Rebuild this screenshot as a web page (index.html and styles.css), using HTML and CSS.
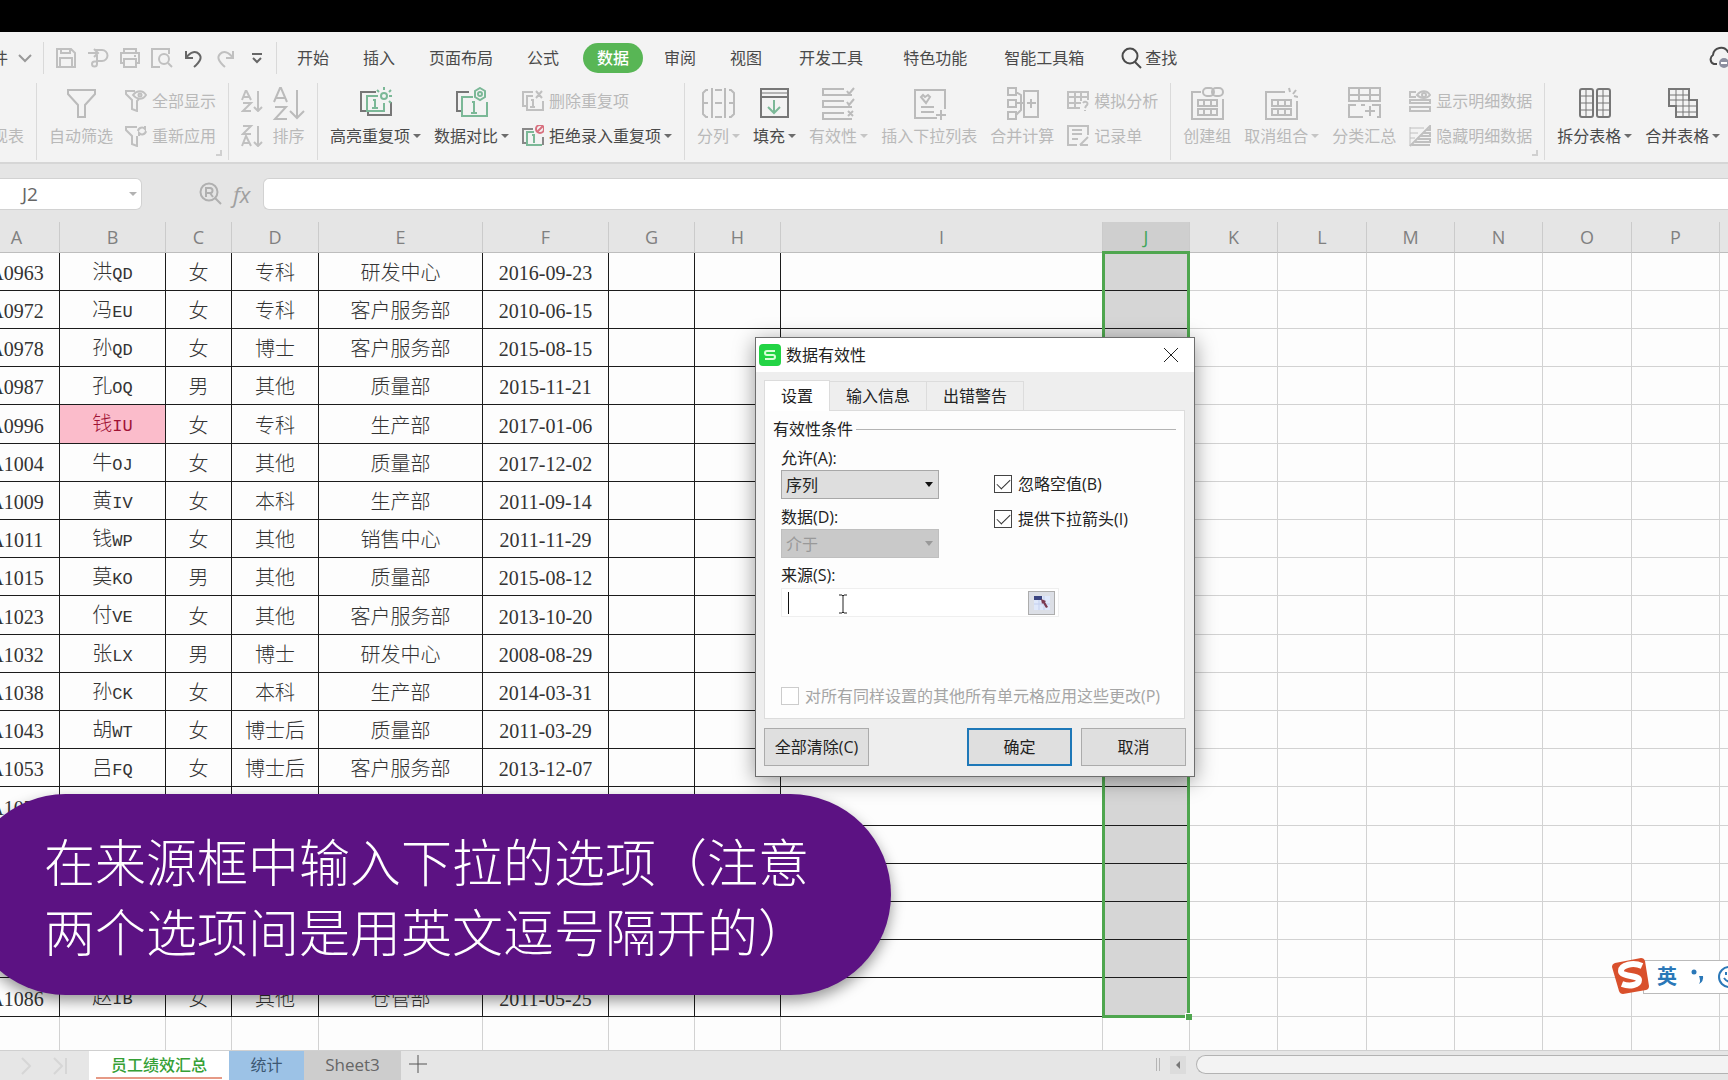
FILE: index.html
```html
<!DOCTYPE html>
<html lang="zh-CN">
<head>
<meta charset="utf-8">
<title>员工绩效汇总</title>
<link rel="stylesheet" href="styles.css">
</head>
<body>
<div class="letterbox"></div>
<header class="toolbar">
  <nav class="menubar">
    <button class="file-menu">件<svg width="14" height="10" viewBox="0 0 14 10"><path d="M1 2l6 6 6-6"/></svg></button>
    <div class="quick">
      <button aria-label="保存"><svg class="ic" viewBox="0 0 22 22"><path d="M2 2h14l4 4v14H2zM6 2v4h9V2M5 20v-9h12v9"/></svg></button>
      <button aria-label="输出"><svg class="ic" viewBox="0 0 22 22"><path d="M8 3h7a5 5 0 0 1 0 11h-5v3a2.500 2.500 0 1 1-2.500-2.500H10V8M1 6h9M7 2l4 4-4 4"/></svg></button>
      <button aria-label="打印"><svg class="ic" viewBox="0 0 22 22"><path d="M5 6V2h12v4M5 16H2V6h18v10h-3M5 12h12v8H5zM15 9h2"/></svg></button>
      <button aria-label="打印预览"><svg class="ic" viewBox="0 0 22 22"><path d="M18 7V2H1v18h8"/><circle cx="13" cy="12" r="5"/><path d="M17 16l4 4"/></svg></button>
      <button aria-label="撤销"><svg class="ic dark" viewBox="0 0 22 22"><path d="M3 4v7h7M3 11c5-7 10-7 13-4s2 7-5 13"/></svg></button>
      <button aria-label="恢复"><svg class="ic" viewBox="0 0 22 22"><path d="M18 4v7h-7M18 11C13 4 8 4 5 7s-2 7 5 13"/></svg></button>
      <button aria-label="自定义"><svg class="ic dark" viewBox="0 0 22 22"><path d="M5 7h10M6 11l4 4 4-4"/></svg></button>
    </div>
    <div class="tabs">
      <button>开始</button><button>插入</button><button>页面布局</button><button>公式</button>
      <button class="active">数据</button>
      <button>审阅</button><button>视图</button><button class="wide">开发工具</button><button class="wide">特色功能</button><button>智能工具箱</button>
      <button class="find"><svg width="22" height="22" viewBox="0 0 22 22"><circle cx="9" cy="9" r="7.500"/><path d="M14 15l6 6"/></svg>查找</button>
    </div>
    <button class="cloud" aria-label="云同步"><svg width="28" height="24" viewBox="0 0 28 24"><path d="M9 18H6a5 5 0 0 1-1-9 8 8 0 0 1 15-3 6 6 0 0 1 3 11"/><circle class="dot" cx="16" cy="17" r="5"/><path class="dash" d="M13 17h6"/></svg></button>
  </nav>
  <div class="ribbon">
    <div class="group first"><button class="big off"><span class="label">现表</span></button></div>
    <div class="group filter">
      <button class="big off"><svg class="bi" viewBox="0 0 33 33"><path d="M3 3h27v4L20 18v12h-7V18L3 7z"/></svg><span class="label">自动筛选</span></button>
      <div class="stack">
        <button class="small off"><svg class="ic" viewBox="0 0 22 22"><path d="M10 1H1v3l6 6v9l5 2V11l2-2"/><path d="M8 5c4-5 10-5 13 0-3 5-9 5-13 0z"/><circle cx="15" cy="5" r="1.500"/></svg>全部显示</button>
        <button class="small off"><svg class="ic" viewBox="0 0 22 22"><path d="M12 2H1v3l6 6v8l5 2V11M13 6a4 4 0 0 1 7-2V1M21 6a4 4 0 0 1-7 2v3"/></svg>重新应用</button>
      </div>
      <i class="corner"></i>
    </div>
    <div class="group sort">
      <div class="stack">
        <button class="small off" aria-label="升序"><svg class="ic" viewBox="0 0 22 22"><path d="M1 10L5 0l5 10M2 7h6M2 13h8L2 21h8M17 1v20M13 17l4 4 4-4"/></svg></button>
        <button class="small off" aria-label="降序"><svg class="ic" viewBox="0 0 22 22"><path d="M2 1h8L2 9h8M1 21l4-10 5 10M2 18h6M17 1v20M13 17l4 4 4-4"/></svg></button>
      </div>
      <button class="big off"><svg class="bi" viewBox="0 0 33 33"><path d="M2 15L8 1h1l6 14M4 11h9M3 20h11L3 32h12M25 3v28M18 24l7 7 7-7"/></svg><span class="label">排序</span></button>
    </div>
    <div class="group">
      <button class="big"><svg class="bi" viewBox="0 0 33 33"><path d="M17 5H2v19h5M9 24v4h23V15"/><path class="g" d="M19 9H8v15h17v-8M14 13h2v8M13 21h6"/><circle class="g" cx="25" cy="9" r="3"/><path class="g" d="M25 0v3M18 3l2 2M32 3l-2 2M30 9h3M30 14l2 2"/></svg><span class="label caret">高亮重复项</span></button>
      <button class="big"><svg class="bi" viewBox="0 0 33 33"><path d="M14 5H2v19h4"/><path class="g" d="M18 10H7v19h25V15M17 15h2v11M16 26h6M25 1l5 3v6l-5 3-5-3V4z"/><circle class="g" cx="25" cy="7" r="2"/></svg><span class="label caret">数据对比</span></button>
      <div class="stack">
        <button class="small off"><svg class="ic" viewBox="0 0 22 22"><path d="M11 2H1v14h3M11 6H5v14h16v-9M9 10h2v7M8 17h5M14 1l6 7M20 1l-6 7"/></svg>删除重复项</button>
        <button class="small"><svg class="ic mid" viewBox="0 0 22 22"><path d="M11 4H1v14h3M21 12v8"/><path class="g" d="M12 7H5v13h15M10 10h2v8"/><circle class="r" cx="18" cy="4" r="4"/><path class="r" d="M15 7l6-6"/></svg><span class="caret">拒绝录入重复项</span></button>
      </div>
    </div>
    <div class="group">
      <button class="big off"><svg class="bi" viewBox="0 0 33 33"><path d="M6 3H4L1 6v21l3 3h2M27 3h2l3 3v21l-3 3h-2M10 1v30M23 1v30M13 3h7M13 16h7M13 30h7M2 16h4M27 16h4"/></svg><span class="label caret">分列</span></button>
      <button class="big"><svg class="bi" viewBox="0 0 33 33"><path d="M3 2h27v28H3zM3 10h27"/><path class="thin" d="M4 6h25"/><path class="g" d="M16 13v13M10 20l6 6 6-6"/></svg><span class="label caret">填充</span></button>
      <button class="big off"><svg class="bi" viewBox="0 0 33 33"><path d="M22 2H1v6h29M22 14H1v6h29M22 26H1v6h29M25 4l2 3 5-6M25 15l2 3 5-6M26 24l5 5M31 24l-5 5"/></svg><span class="label caret">有效性</span></button>
      <button class="big off"><svg class="bi" viewBox="0 0 33 33"><path d="M24 31H2V3h30v19M28 23v10M23 28h10M8 10l5 6 4-6-2-2-3 2-2-2zM8 20h13M8 25h13"/></svg><span class="label">插入下拉列表</span></button>
      <button class="big off"><svg class="bi" viewBox="0 0 33 33"><path d="M2 1h8v7H2zM2 13h8v7H2zM2 25h8v7H2zM18 4h14v26H18zM25 12v9M21 16h9M10 5l5 3v15l-5 5M10 16h8"/></svg><span class="label">合并计算</span></button>
      <div class="stack">
        <button class="small off"><svg class="ic" viewBox="0 0 22 22"><path d="M13 18H1V2h20v8M1 7h20M8 2v16M14 2v9M1 13h13M16 13c2-3 7 0 3 3l-1 2M18 20v1"/></svg>模拟分析</button>
        <button class="small off"><svg class="ic" viewBox="0 0 22 22"><path d="M10 20H1V1h20v9M5 5h10M5 9h10M5 14h6M13 20l8-8M13 20h8"/></svg>记录单</button>
      </div>
    </div>
    <div class="group">
      <button class="big off"><svg class="bi" viewBox="0 0 33 33"><path d="M10 5H1v27h31V12M7 13h19v6H7zM7 22h19v6H7zM13 13v6M20 13v6M13 22v6M20 22v6"/><rect x="12" y="1" width="11" height="8" rx="4"/><rect x="21" y="1" width="11" height="8" rx="4"/></svg><span class="label">创建组</span></button>
      <button class="big off"><svg class="bi" viewBox="0 0 33 33"><path d="M20 5H1v27h31V14M7 13h19v6H7zM7 22h19v6H7zM13 13v6M20 13v6M13 22v6M20 22v6M24 1l1 4M31 3l-3 4M33 10l-4-1"/></svg><span class="label caret">取消组合</span></button>
      <button class="big off"><svg class="bi" viewBox="0 0 33 33"><path d="M1 1h31v13H1zM1 8h31M11 1v13M22 1v13M8 18H1v12h14M13 18h4M24 18h8v12h-3M22 19v10M17 24h10"/></svg><span class="label">分类汇总</span></button>
      <div class="stack">
        <button class="small off"><svg class="ic" viewBox="0 0 22 22"><path d="M7 2H1v5h6M7 10H1M1 10h20v3H1zM1 17h20v4H1zM8 5c4-5 10-5 13 0-3 4-9 4-13 0z"/><circle cx="15" cy="5" r="2"/></svg>显示明细数据</button>
        <button class="small off"><svg class="ic" viewBox="0 0 22 22"><path class="thin" d="M1 3h14M1 8h8M1 13h5M1 2v19"/><path d="M1 21L21 1v4h-4M14 8h7v3H11M9 14h12v3H6M3 20h18"/></svg>隐藏明细数据</button>
      </div>
      <i class="corner"></i>
    </div>
    <div class="group last">
      <button class="big"><svg class="bi" viewBox="0 0 33 33"><rect x="2" y="2" width="13" height="28" rx="2"/><rect x="19" y="2" width="13" height="28" rx="2"/><path class="thin" d="M8 2v28M2 9h13M2 16h13M2 23h13M25 2v28M19 9h13M19 16h13M19 23h13"/></svg><span class="label caret">拆分表格</span></button>
      <button class="big"><svg class="bi" viewBox="0 0 33 33"><path d="M3 2h20v11h8v17H10V19H3z"/><path class="thin" d="M10 2v17M17 2v28M23 13v17M3 8h20M3 13h20M10 19h21M10 25h21"/></svg><span class="label caret">合并表格</span></button>
    </div>
  </div>
</header>
<section class="formula">
  <button class="namebox caret">J2</button>
  <svg class="lookup" width="24" height="24" viewBox="0 0 24 24"><circle cx="10" cy="10" r="8.500"/><path d="M7 15V6h4a2 2 0 0 1 0 5H7M11 11l3 4M16 16l6 6"/></svg>
  <span class="fx">fx</span>
  <input aria-label="编辑栏" class="fxinput" type="text">
</section>
<main class="sheet">
  <table>
    <colgroup><col class="wa"><col class="wb"><col class="wc"><col class="wd"><col class="we"><col class="wf"><col class="wg"><col class="wg"><col class="wi"><col class="wd"><col class="wk"><col class="wl"><col class="wk"><col class="wk"><col class="wl"><col class="wk"><col></colgroup>
    <thead><tr><th>A<th>B<th>C<th>D<th>E<th>F<th>G<th>H<th>I<th class="on">J<th>K<th>L<th>M<th>N<th>O<th>P<th></tr></thead>
    <tbody class="data">
    <tr><td>A0963<td>洪<b>QD</b><td>女<td>专科<td>研发中心<td>2016-09-23<td><td><td><td><td><td><td><td><td><td><td></tr>
    <tr><td>A0972<td>冯<b>EU</b><td>女<td>专科<td>客户服务部<td>2010-06-15<td><td><td><td><td><td><td><td><td><td><td><td></tr>
    <tr><td>A0978<td>孙<b>QD</b><td>女<td>博士<td>客户服务部<td>2015-08-15<td><td><td><td><td><td><td><td><td><td><td><td></tr>
    <tr><td>A0987<td>孔<b>OQ</b><td>男<td>其他<td>质量部<td>2015-11-21<td><td><td><td><td><td><td><td><td><td><td><td></tr>
    <tr><td>A0996<td class="dup">钱<b>IU</b><td>女<td>专科<td>生产部<td>2017-01-06<td><td><td><td><td><td><td><td><td><td><td><td></tr>
    <tr><td>A1004<td>牛<b>OJ</b><td>女<td>其他<td>质量部<td>2017-12-02<td><td><td><td><td><td><td><td><td><td><td><td></tr>
    <tr><td>A1009<td>黄<b>IV</b><td>女<td>本科<td>生产部<td>2011-09-14<td><td><td><td><td><td><td><td><td><td><td><td></tr>
    <tr><td>A1011<td>钱<b>WP</b><td>女<td>其他<td>销售中心<td>2011-11-29<td><td><td><td><td><td><td><td><td><td><td><td></tr>
    <tr><td>A1015<td>莫<b>KO</b><td>男<td>其他<td>质量部<td>2015-08-12<td><td><td><td><td><td><td><td><td><td><td><td></tr>
    <tr><td>A1023<td>付<b>VE</b><td>女<td>其他<td>客户服务部<td>2013-10-20<td><td><td><td><td><td><td><td><td><td><td><td></tr>
    <tr><td>A1032<td>张<b>LX</b><td>男<td>博士<td>研发中心<td>2008-08-29<td><td><td><td><td><td><td><td><td><td><td><td></tr>
    <tr><td>A1038<td>孙<b>CK</b><td>女<td>本科<td>生产部<td>2014-03-31<td><td><td><td><td><td><td><td><td><td><td><td></tr>
    <tr><td>A1043<td>胡<b>WT</b><td>女<td>博士后<td>质量部<td>2011-03-29<td><td><td><td><td><td><td><td><td><td><td><td></tr>
    <tr><td>A1053<td>吕<b>FQ</b><td>女<td>博士后<td>客户服务部<td>2013-12-07<td><td><td><td><td><td><td><td><td><td><td><td></tr>
    <tr><td>A1072<td><td><td><td><td><td><td><td><td><td><td><td><td><td><td><td><td></tr>
    <tr><td><td><td><td><td><td><td><td><td><td><td><td><td><td><td><td><td><td></tr>
    <tr><td><td><td><td><td><td><td><td><td><td><td><td><td><td><td><td><td><td></tr>
    <tr><td><td><td><td><td><td><td><td><td><td><td><td><td><td><td><td><td><td></tr>
    <tr><td><td><td><td><td><td><td><td><td><td><td><td><td><td><td><td><td><td></tr>
    <tr><td>A1086<td>赵<b>IB</b><td>女<td>其他<td>仓管部<td>2011-05-25<td><td><td><td><td><td><td><td><td><td><td><td></tr>
    </tbody>
    <tbody class="blank"><tr><td><td><td><td><td><td><td><td><td><td><td><td><td><td><td><td><td></tr></tbody>
  </table>
  <div class="selection"></div>
</main>
<footer class="sheetbar">
  <div class="nav"><svg width="50" height="18" viewBox="0 0 50 18"><path d="M2 1l8 8-8 8M34 1l8 8-8 8M46 1v16"/></svg></div>
  <button class="tab current"><span>员工绩效汇总</span></button>
  <button class="tab blue">统计</button>
  <button class="tab grey">Sheet3</button>
  <button class="add" aria-label="新建工作表"><svg width="18" height="18" viewBox="0 0 18 18"><path d="M9 0v18M0 9h18"/></svg></button>
  <div class="hscroll"><i class="grip"></i><button class="left" aria-label="向左滚动"></button><div class="track"></div></div>
</footer>

<form class="dialog">
  <div class="title">
    <svg width="22" height="22" viewBox="0 0 22 22"><rect width="22" height="22" rx="4" fill="#22d444" stroke="none"/><path d="M16 7H8a2 2 0 0 0 0 4h6a2 2 0 0 1 0 4H6" fill="none" stroke="#d8ffd8" stroke-width="2"/></svg>
    <h2>数据有效性</h2>
    <button type="button" aria-label="关闭"><svg width="14" height="14" viewBox="0 0 14 14"><path d="M0 0l14 14M14 0L0 14"/></svg></button>
  </div>
  <div class="dtabs"><button type="button" class="sel">设置</button><button type="button">输入信息</button><button type="button">出错警告</button></div>
  <div class="panel">
    <div class="legend">有效性条件</div>
    <div class="cols">
      <div class="fields">
        <label for="allow">允许(A):</label>
        <div class="pick"><select id="allow"><option>序列</option></select></div>
        <label for="cond">数据(D):</label>
        <div class="pick disabled"><select id="cond" disabled><option>介于</option></select></div>
      </div>
      <div class="checks">
        <label><input type="checkbox" checked>忽略空值(B)</label>
        <label><input type="checkbox" checked>提供下拉箭头(I)</label>
      </div>
    </div>
    <label class="srclabel" for="src">来源(S):</label>
    <div class="source">
      <i class="insertion"></i>
      <input id="src" type="text">
      <button type="button" aria-label="选择区域"><svg width="18" height="16" viewBox="0 0 18 16"><g stroke="none"><rect width="16" height="14" x="1" y="1" fill="#dfe8fb"/><path d="M1 1h8v4H1z" fill="#3a4480"/></g><path d="M1 9h16M6 5v10M11 1v14" stroke="#c3cfee"/><path d="M8 4l5 2-1 1 3 5-2 1-3-5-1 1z" fill="#7b3a52" stroke="none"/></svg></button>
      <svg class="ibeam" width="10" height="20" viewBox="0 0 10 20"><path d="M1 1h3l1 1 1-1h3M5 2v16M1 19h3l1-1 1 1h3"/></svg>
    </div>
    <label class="apply"><input type="checkbox" disabled>对所有同样设置的其他所有单元格应用这些更改(P)</label>
  </div>
  <div class="actions"><button type="button">全部清除(C)</button><button type="button" class="ok">确定</button><button type="button">取消</button></div>
</form>

<p class="caption">在来源框中输入下拉的选项（注意<br>两个选项间是用英文逗号隔开的）</p>

<aside class="ime">
  <svg class="logo" width="40" height="38" viewBox="0 0 40 38"><path d="M4 6L30 1q3 0 4 3l4 25q0 3-3 4L12 37q-3 0-4-3L1 10q0-3 3-4z" fill="#d9502c"/><path d="M31 9C22 5 10 8 10 14s18 4 18 9-9 7-17 4" fill="none" stroke="#fff" stroke-width="6"/></svg>
  <div class="bar"><span>英</span><svg width="14" height="18" viewBox="0 0 14 18"><circle cx="4" cy="4" r="2.500"/><path d="M9 8h4q1 5-4 8 2-3 0-8z"/></svg><svg width="24" height="24" viewBox="0 0 24 24"><circle class="face" cx="12" cy="12" r="10"/><path class="face" d="M7 13q5 7 10 0M9 7v3M15 7v3"/></svg></div>
</aside>
</body>
</html>
```
FILE: styles.css
```css
* { box-sizing: border-box; }
body {
  margin: 0;
  position: relative;
  min-height: 100vh;
  overflow: hidden;
  display: flex;
  flex-direction: column;
  background: #e5e5e5;
  font: 16px/24px "Open Sans", "Noto Sans CJK SC", sans-serif;
  color: #4a4a4a;
}
button, input, select { font: inherit; color: inherit; margin: 0; }
button { border: 0; padding: 0; background: none; white-space: nowrap; }
svg { display: block; flex: none; fill: none; stroke: currentColor; stroke-width: 2; }
.letterbox { height: 32px; background: #000; }

/* menu row */
.toolbar { background: #f3f3f3; border-bottom: 2px solid #d6d6d6; }
.menubar { display: flex; align-items: center; height: 51px; }
.file-menu { display: flex; align-items: center; gap: 10px; width: 44px; height: 32px; text-indent: -8px; border-right: 1px solid #d9d9d9; }
.file-menu svg { stroke: #999; }
.quick { display: flex; gap: 10px; width: 233px; height: 32px; padding-left: 11px; align-items: center; border-right: 1px solid #d9d9d9; }
.ic { width: 22px; height: 22px; color: #c0c0c0; }
.ic.dark { color: #666; }
.ic.mid { color: #888; }
.tabs { display: flex; align-items: center; padding-left: 3px; }
.tabs button { height: 30px; padding: 0 17px; }
.tabs .wide { padding: 0 20px; }
.tabs .active { margin: 0 4px 0 7px; padding: 0 14px; border-radius: 15px; background: #58b655; color: #fff; font-weight: 500; }
.tabs .find { display: flex; align-items: center; gap: 2px; padding-left: 20px; }
.cloud { margin-left: auto; margin-right: -8px; }
.cloud .dot { fill: #8d90a0; stroke: none; }
.cloud .dash { stroke: #fff; }

/* ribbon */
.ribbon { display: flex; height: 79px; padding-bottom: 2px; overflow: hidden; }
.group { position: relative; display: flex; flex: none; gap: 13px; padding: 0 12px; border-right: 1px solid #dadada; }
.group.filter { gap: 12px; }
.group.sort { gap: 9px; }
.group.first { width: 37px; justify-content: flex-end; }
.group.last { border: 0; }
.big { display: flex; flex-direction: column; align-items: center; justify-content: flex-end; padding-bottom: 12px; }
.bi { width: 33px; height: 33px; margin-bottom: 4px; color: #777; }
.off .bi { color: #bbb; }
.big .label { display: block; }
.off { color: #b9b9b9; }
.stack { display: flex; flex-direction: column; gap: 11px; padding-top: 6px; }
.small { display: flex; align-items: center; gap: 5px; height: 24px; }
.g { stroke: #7bb897; }
.r { stroke: #d8707f; }
.thin { stroke-width: 1; }
.caret::after { content: ""; display: inline-block; margin-left: 3px; vertical-align: 4px; border: 4px solid transparent; border-top-color: currentColor; border-bottom: 0; opacity: .8; }
.corner { position: absolute; right: 6px; bottom: 4px; width: 6px; height: 6px; border: solid #d0d0d0; border-width: 0 2px 2px 0; }

/* formula row */
.formula { display: flex; align-items: center; height: 58px; padding-top: 2px; }
.namebox { width: 142px; height: 32px; padding: 0 4px 0 22px; display: flex; align-items: center; justify-content: space-between; background: #fff; border: 1px solid #d2d2d2; border-left: 0; border-radius: 0 6px 6px 0; font-size: 19px; color: #666; }
.namebox::after { opacity: .5; }
.lookup { margin-left: 57px; color: #b0b0b0; }
.fx { width: 40px; padding-left: 10px; font: italic 22px/24px "Open Sans", sans-serif; color: #a0a0a0; }
.fxinput { flex: 1; height: 32px; border: 1px solid #d2d2d2; border-right: 0; border-radius: 6px 0 0 6px; background: #fff; outline: 0; }

/* grid */
.sheet { position: relative; flex: 1; overflow: hidden; background: #fdfdfd; }
table { width: calc(100% + 60px); margin-left: -26px; table-layout: fixed; border-collapse: separate; border-spacing: 0; }
.wa, .wg { width: 86px; }
.wb { width: 106px; }
.wc { width: 66px; }
.wd { width: 87px; }
.we { width: 164px; }
.wf { width: 126px; }
.wi { width: 322px; }
.wk { width: 88px; }
.wl { width: 89px; }
th { height: 31px; padding: 0; background: #e5e5e5; border-bottom: 1px solid #bdbdbd; border-right: 1px solid #cbcbcb; font-size: 18px; line-height: 24px; font-weight: 400; color: #808080; }
th.on { background: #cfcfcf; color: #3fa55b; }
td { padding: 3px 0 0; height: 38px; text-align: center; white-space: nowrap; overflow: hidden; border: solid #d2d2d2; border-width: 0 1px 1px 0; font: 300 20px/24px "Liberation Serif", "Noto Sans CJK SC", serif; color: #333; }
tr:nth-child(5n) td { height: 39px; }
td b { font: 17px/24px "Liberation Mono", monospace; }
.data td:nth-child(-n+9) { border-color: #1c1c1c; }
.data td:nth-child(10) { background: #d6d6d6; border-bottom-color: #1c1c1c; }
.data td.dup { background: #fbbccb; color: #a01335; }
.blank td { height: 33px; border-bottom: 0; }
.selection { position: absolute; left: 1102px; top: 29px; width: 88px; height: 767px; border: 3px solid #4fa64f; }
.selection::after { content: ""; position: absolute; right: -5px; bottom: -5px; width: 6px; height: 6px; background: #4fa64f; border: solid #fff; border-width: 1px 0 0 1px; }

/* sheet tabs */
.sheetbar { display: flex; align-items: center; height: 30px; border-top: 1px solid #d0d0d0; background: #e6e6e6; }
.nav { width: 89px; padding-left: 20px; color: #d6d6d6; }
.tab { height: 29px; padding-bottom: 2px; }
.current { width: 140px; padding: 0 7px 1px; background: #fff; color: #35a035; font-weight: 500; }
.current span { display: block; height: 28px; line-height: 28px; border-bottom: 2px solid #e69a86; }
.blue { width: 75px; background: #9cc2e6; color: #3d5873; }
.grey { width: 97px; background: #cdcdcd; color: #666; font-size: 17px; }
.add { margin-left: 8px; padding-bottom: 4px; color: #555; }
.add svg { stroke-width: 1; }
.hscroll { display: flex; align-items: center; flex: 1; margin-left: 729px; padding-bottom: 2px; }
.grip { width: 4px; height: 13px; border: solid #b5b5b5; border-width: 0 1px; }
.left { width: 16px; height: 18px; margin: 0 10px; background: #dcdcdc; display: grid; place-items: center; }
.left::after { content: ""; border: 4px solid transparent; border-right-color: #777; border-left: 0; }
.track { flex: 1; height: 19px; border: 1px solid #b3b3b3; border-right: 0; border-radius: 10px 0 0 10px; background: #f3f3f3; }

/* dialog */
.dialog { position: absolute; left: 755px; top: 337px; width: 440px; display: flex; flex-direction: column; border: 1px solid #6e6e6e; background: #eee; box-shadow: 0 4px 20px rgba(0, 0, 0, .4); color: #222; }
.title { display: flex; align-items: center; gap: 5px; height: 34px; padding: 0 16px 0 3px; background: #fff; }
.title h2 { margin: 0; flex: 1; font: inherit; }
.title svg { stroke-width: 1; }
.dtabs { display: flex; align-items: flex-end; height: 38px; padding: 8px 8px 0; }
.dtabs button { width: 97px; height: 29px; border: 1px solid #dcdcdc; border-left: 0; border-bottom: 0; }
.dtabs .sel { position: relative; width: 66px; height: 31px; margin-bottom: -1px; border-left: 1px solid #dcdcdc; background: #fff; }
.panel { margin: 0 9px 0 8px; height: 309px; padding: 5px 8px 0; border: 1px solid #dcdcdc; background: #fdfdfd; display: flex; flex-direction: column; }
.legend { display: flex; align-items: center; gap: 3px; height: 26px; margin-bottom: 2px; }
.legend::after { content: ""; flex: 1; height: 1px; background: #b4b4b4; }
.cols { display: flex; justify-content: space-between; padding-left: 8px; }
.fields { width: 158px; }
.fields label { display: block; height: 26px; line-height: 28px; }
.pick { position: relative; margin-bottom: 4px; }
.pick select { appearance: none; display: block; width: 158px; height: 29px; padding: 0 4px; border: 1px solid #a8a8a8; border-radius: 0; background: #dedede; }
.pick::after { content: ""; position: absolute; right: 6px; top: 12px; border: 4px solid transparent; border-top: 5px solid #111; border-bottom: 0; }
.pick.disabled select { background: #c9c9c9; border-color: #bfbfbf; color: #999; opacity: 1; }
.pick.disabled::after { border-top-color: #999; }
.checks { width: 182px; padding-top: 28px; display: flex; flex-direction: column; gap: 11px; }
.checks label, .apply { display: flex; align-items: center; gap: 6px; height: 24px; white-space: nowrap; }
input[type="checkbox"] { appearance: none; flex: none; width: 18px; height: 18px; border: 1px solid #444; background: #fff; display: grid; place-items: center; }
input[type="checkbox"]:checked::after { content: ""; width: 12px; height: 6px; border: solid #333; border-width: 0 0 1px 1px; rotate: -45deg; translate: 0 -2px; }
.srclabel { padding-left: 8px; height: 26px; line-height: 27px; }
.source { position: relative; display: flex; align-items: center; width: 278px; height: 29px; margin-left: 8px; border: 1px solid #efefef; background: #fff; padding-right: 3px; }
.source input { flex: 1; min-width: 0; height: 27px; border: 0; outline: 0; background: none; }
.source button { width: 27px; height: 24px; border: 1px solid #adadad; background: #dcdfe6; display: grid; place-items: center; }
.source button svg { stroke-width: 1; }
.insertion { width: 1px; height: 22px; margin-left: 6px; background: #111; }
.ibeam { position: absolute; left: 56px; top: 5px; stroke-width: 1; }
.apply { margin: auto 0 10px 8px; color: #a5a5a5; }
.apply input { border-color: #ccc; }
.actions { display: flex; gap: 9px; padding: 9px 8px 10px; }
.actions button { width: 105px; height: 38px; border: 1px solid #ababab; background: #dfdfdf; }
.actions .ok { margin-left: auto; border: 2px solid #1e78b8; }

/* caption banner */
.caption { position: absolute; left: -35px; top: 794px; margin: 0; padding: 31px 82px 30px 79px; border-radius: 101px; background: #5c1283; color: #fff; font: 300 51px/70px "Noto Sans CJK SC", sans-serif; white-space: nowrap; box-shadow: 0 6px 14px rgba(0, 0, 0, .4); }

/* input method bar */
.ime { position: absolute; right: 0; top: 957px; display: flex; width: 117px; overflow: hidden; }
.logo { position: relative; stroke: none; }
.bar { display: flex; flex: none; align-items: center; gap: 13px; width: 100px; height: 34px; margin: 3px 0 0 -8px; padding-left: 13px; border: 1px solid #bbb; background: #fff; color: #2b78b8; font-size: 20px; font-weight: 700; }
.bar svg { fill: currentColor; stroke: none; }
.bar .face { fill: none; stroke: currentColor; }
```
